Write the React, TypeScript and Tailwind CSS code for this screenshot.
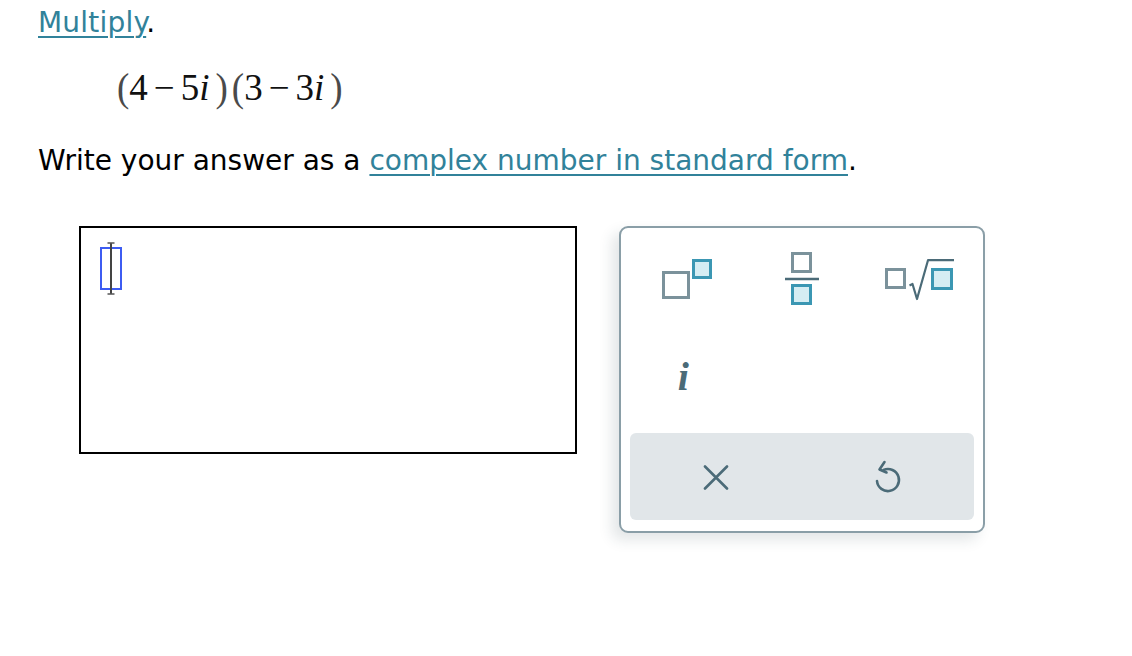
import React from 'react';

const linkColor = "#31829a";
const iconDark = "#4b6b78";
const iconGray = "#7b929b";
const iconTeal = "#3b97b3";
const iconFill = "#d5edf3";

const SuperscriptIcon = () => (
    <svg width="52" height="42" viewBox="0 0 52 42" fill="none">
        <rect x="2.5" y="14.5" width="25" height="25" stroke={iconGray} strokeWidth="3" />
        <rect x="32.5" y="2.5" width="17" height="17" fill={iconFill} stroke={iconTeal} strokeWidth="3" />
    </svg>
);

const FractionIcon = () => (
    <svg width="36" height="56" viewBox="0 0 36 56" fill="none">
        <rect x="8.5" y="2.5" width="18" height="18" stroke={iconGray} strokeWidth="3" />
        <line x1="1" y1="28" x2="35" y2="28" stroke={iconDark} strokeWidth="2.5" />
        <rect x="8.5" y="34.5" width="18" height="18" fill={iconFill} stroke={iconTeal} strokeWidth="3" />
    </svg>
);

const SqrtIcon = () => (
    <svg width="73" height="43" viewBox="0 0 73 43" fill="none">
        <rect x="3.5" y="11.5" width="18" height="18" stroke={iconGray} strokeWidth="3" />
        <path d="M26.5 27.5 L29.5 26 L34 41 L45 2.2 L71 2.2" stroke={iconDark} strokeWidth="2.2" strokeLinejoin="round" />
        <rect x="49.5" y="11.5" width="19" height="19" fill={iconFill} stroke={iconTeal} strokeWidth="3" />
    </svg>
);

const CloseIcon = () => (
    <svg width="26" height="25" viewBox="0 0 26 25" fill="none">
        <path d="M2 1.5 L24 23.5 M24 1.5 L2 23.5" stroke={iconDark} strokeWidth="2.6" strokeLinecap="round" />
    </svg>
);

const UndoIcon = () => (
    <svg width="28" height="34" viewBox="0 0 28 34" fill="none">
        <path d="M9.5 10 A11 11 0 1 1 3 21" stroke={iconDark} strokeWidth="2.6" strokeLinecap="round" fill="none" />
        <path d="M10.5 2 L5.5 9.5 L12.5 12.5" stroke={iconDark} strokeWidth="2.6" strokeLinecap="round" strokeLinejoin="round" fill="none" />
    </svg>
);

const Cursor = () => (
    <div className="relative w-[22px] h-[53px]">
        <div className="absolute left-0 top-[5px] w-[22px] h-[43px] border-2 border-[#3d5cf2]" />
        <svg className="absolute left-0 top-0" width="22" height="53" viewBox="0 0 22 53" fill="none">
            <line x1="11" y1="1" x2="11" y2="52" stroke="#444" strokeWidth="2" />
            <path d="M7.5 1 L14.5 1 M7.5 52 L14.5 52" stroke="#555" strokeWidth="1.5" />
        </svg>
    </div>
);

const Paren = ({ children }: { children: React.ReactNode }) => (
    <span className="text-[#4a4a4a] inline-block scale-y-[1.06]">{children}</span>
);

const App: React.FC = () => {
    return (
        <div className="w-full h-[656px] bg-white text-black pl-[38px] pt-[7px]" style={{ fontFamily: '"DejaVu Sans", Verdana, sans-serif' }}>

            {/* Prompt */}
            <div className="text-[28px] leading-[32px] tracking-[0.2px]">
                <span className="underline underline-offset-[4px] decoration-[2px]" style={{ color: linkColor }}>Multiply</span>.
            </div>

            {/* Expression */}
            <div className="mt-[29px] ml-[79px] h-[40px] leading-[40px] text-[37px] text-[#111] flex items-center" style={{ fontFamily: '"Liberation Serif", "Times New Roman", serif' }}>
                <Paren>(</Paren>
                <span>4</span>
                <span className="mx-[6px]">−</span>
                <span>5</span>
                <span className="italic mr-[6px]">i</span>
                <Paren>)</Paren>
                <span className="ml-[4px]"><Paren>(</Paren></span>
                <span>3</span>
                <span className="mx-[6px]">−</span>
                <span>3</span>
                <span className="italic mr-[6px]">i</span>
                <Paren>)</Paren>
            </div>

            <div className="mt-[37px] text-[28px] leading-[32px]">
                Write your answer as a{' '}
                <span className="underline underline-offset-[4px] decoration-[2px]" style={{ color: linkColor }}>complex number in standard form</span>.
            </div>

            {/* Answer area */}
            <div className="mt-[49px] flex items-start">
                <div className="ml-[41px] w-[498px] h-[228px] border-2 border-black pl-[19px] pt-[14px]">
                    <Cursor />
                </div>

                <div className="ml-[42px] w-[366px] h-[307px] border-2 border-[#8a9ea7] rounded-[9px] bg-white shadow-[-7px_7px_14px_rgba(40,60,70,0.13)] px-[9px] pt-[2px]">
                    <div className="grid grid-cols-3">
                        <div className="h-[98px] flex items-center justify-center">
                            <SuperscriptIcon />
                        </div>
                        <div className="h-[98px] flex items-center justify-center">
                            <FractionIcon />
                        </div>
                        <div className="h-[98px] flex items-center justify-center pl-[6px]">
                            <SqrtIcon />
                        </div>
                        <div className="h-[98px] flex items-center justify-center">
                            <span className="text-[40px] font-bold italic leading-none mr-[8px]" style={{ fontFamily: '"Liberation Serif", "Times New Roman", serif', color: iconDark }}>i</span>
                        </div>
                    </div>

                    <div className="mt-[7px] h-[87px] bg-[#e1e6e9] rounded-[6px] grid grid-cols-2">
                        <div className="flex items-center justify-center pt-[2px]">
                            <CloseIcon />
                        </div>
                        <div className="flex items-center justify-center">
                            <UndoIcon />
                        </div>
                    </div>
                </div>
            </div>
        </div>
    );
};

export default App;
